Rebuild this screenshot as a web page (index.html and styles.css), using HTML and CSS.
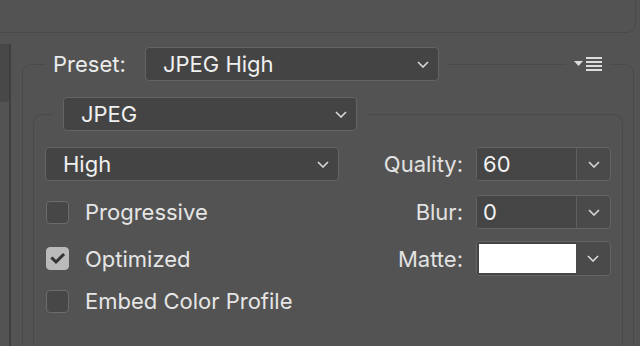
FILE: index.html
```html
<!DOCTYPE html>
<html>
<head>
<meta charset="utf-8">
<link rel="stylesheet" href="styles.css">
</head>
<body>
<div class="top-panel"></div>
<div class="body-row">
  <div class="side-strip"><div class="side-block"></div></div>
  <div class="group outer">
    <div class="group-head">
      <div class="mask preset-mask">
        <span class="head-label">Preset:</span>
        <div class="select preset"><span class="select-text">JPEG High</span><svg class="chev" viewBox="0 0 12 7"><path d="M1 1 L6 6 L11 1"/></svg></div>
      </div>
      <div class="spacer"></div>
      <div class="mask menu-mask">
        <svg class="menu-icon" width="28" height="14" viewBox="0 0 28 14"><path class="tri" d="M0 4 H9 L4.5 9 Z"/><rect x="12" y="0" width="16" height="2"/><rect x="12" y="4" width="16" height="2"/><rect x="12" y="8" width="16" height="2"/><rect x="12" y="12" width="16" height="2"/></svg>
      </div>
    </div>
    <div class="group inner">
      <div class="group-head inner-head">
        <div class="mask jpeg-mask">
          <div class="select jpeg"><span class="select-text">JPEG</span><svg class="chev" viewBox="0 0 12 7"><path d="M1 1 L6 6 L11 1"/></svg></div>
        </div>
      </div>
      <div class="row row-quality">
        <div class="select high"><span class="select-text">High</span><svg class="chev" viewBox="0 0 12 7"><path d="M1 1 L6 6 L11 1"/></svg></div>
        <div class="field-label">Quality:</div>
        <div class="combo"><span class="combo-value">60</span><span class="combo-btn"><svg class="chev" viewBox="0 0 12 7"><path d="M1 1 L6 6 L11 1"/></svg></span></div>
      </div>
      <div class="row row-blur">
        <label class="check"><span class="box"></span><span class="check-text">Progressive</span></label>
        <div class="field-label">Blur:</div>
        <div class="combo"><span class="combo-value">0</span><span class="combo-btn"><svg class="chev" viewBox="0 0 12 7"><path d="M1 1 L6 6 L11 1"/></svg></span></div>
      </div>
      <div class="row row-matte">
        <label class="check"><span class="box checked"><svg viewBox="0 0 23 23"><path d="M6.5 11.5 L10 15 L17 8"/></svg></span><span class="check-text">Optimized</span></label>
        <div class="field-label">Matte:</div>
        <div class="combo matte"><span class="combo-value swatch-wrap"><span class="swatch"></span></span><span class="combo-btn"><svg class="chev" viewBox="0 0 12 7"><path d="M1 1 L6 6 L11 1"/></svg></span></div>
      </div>
      <div class="row row-embed">
        <label class="check"><span class="box"></span><span class="check-text">Embed Color Profile</span></label>
      </div>
    </div>
  </div>
</div>
</body>
</html>
```
FILE: styles.css
```css
html, body {
  margin: 0;
  padding: 0;
  background: #535353;
  overflow: hidden;
  width: 640px;
  height: 346px;
}
body {
  font-family: Inter, "Liberation Sans", sans-serif;
  font-size: 22px;
  color: #e4e4e4;
}
.top-panel {
  width: 635px;
  height: 32px;
  border-bottom: 1px solid #4a4a4a;
  border-right: 1px solid #4a4a4a;
  border-bottom-right-radius: 9px;
  box-sizing: content-box;
}
.body-row {
  display: flex;
  align-items: flex-start;
}
.side-strip {
  width: 9px;
  margin-top: 11px;
  height: 320px;
  border-right: 2px solid #3f3f3f;
  flex: none;
}
.side-block {
  height: 58px;
  background: #484848;
}
.group {
  border: 1px solid #4a4a4a;
  border-radius: 9px;
}
.outer {
  margin-top: 31px;
  margin-left: 11px;
  width: 610px;
  height: 300px;
  flex: none;
}
.group-head {
  display: flex;
  align-items: center;
  height: 34px;
  margin-top: -18px;
}
.mask {
  background: #535353;
  display: flex;
  align-items: center;
  height: 34px;
}
.preset-mask {
  margin-left: 22px;
  padding: 0 9px 0 8px;
}
.head-label {
  width: 92px;
  color: #ececec;
}
.spacer { flex: 1; }
.menu-mask {
  margin-right: 23px;
  padding: 0 8px;
}
.menu-icon { display: block; fill: #dcdcdc; }
.select {
  box-sizing: border-box;
  width: 294px;
  height: 34px;
  background: #444444;
  border: 1px solid #646464;
  border-radius: 4px;
  display: flex;
  align-items: center;
  padding: 0 9px 0 17px;
  color: #f0f0f0;
}
.select-text { flex: 1; }
.chev {
  width: 12px;
  height: 7px;
  fill: none;
  stroke: #d8d8d8;
  stroke-width: 1.6;
  display: block;
}
.inner {
  margin: 33px 10px 0 10px;
  height: 260px;
}
.jpeg-mask {
  margin-left: 18px;
  padding: 0 10px 0 11px;
}
.row {
  display: flex;
  align-items: center;
  height: 34px;
  padding: 0 11px 0 11px;
}
.row-quality { margin-top: 16px; }
.row-blur { margin-top: 14px; }
.row-matte { margin-top: 12px; height: 35px; }
.row-embed { margin-top: 8px; }
.field-label {
  flex: 1;
  text-align: right;
  margin-right: 13px;
  color: #e2e2e2;
}
.combo {
  box-sizing: border-box;
  width: 135px;
  height: 100%;
  border: 1px solid #646464;
  border-radius: 4px;
  display: flex;
  overflow: hidden;
  background: #4a4a4a;
}
.combo-value {
  width: 100px;
  background: #454545;
  border-right: 1px solid #5f5f5f;
  display: flex;
  align-items: center;
  padding-left: 6px;
  box-sizing: border-box;
  color: #f2f2f2;
}
.combo-btn {
  flex: 1;
  display: flex;
  align-items: center;
  justify-content: center;
}
.swatch-wrap {
  padding: 2px 0 2px 2px;
  border-right: none;
  width: 99px;
}
.swatch {
  display: block;
  width: 100%;
  height: 100%;
  background: #ffffff;
}
.check {
  display: flex;
  align-items: center;
  gap: 16px;
  margin-left: 1px;
  width: 300px;
}
.box {
  box-sizing: border-box;
  width: 23px;
  height: 23px;
  border: 1.5px solid #6c6c6c;
  border-radius: 4px;
  background: #474747;
  flex: none;
}
.box.checked {
  background: #bababa;
  border-color: #bababa;
}
.box svg {
  display: block;
  width: 23px;
  height: 23px;
  margin: -1.5px;
  fill: none;
  stroke: #333333;
  stroke-width: 3;
  stroke-linecap: square;
}
.check-text { color: #e6e6e6; }
```
